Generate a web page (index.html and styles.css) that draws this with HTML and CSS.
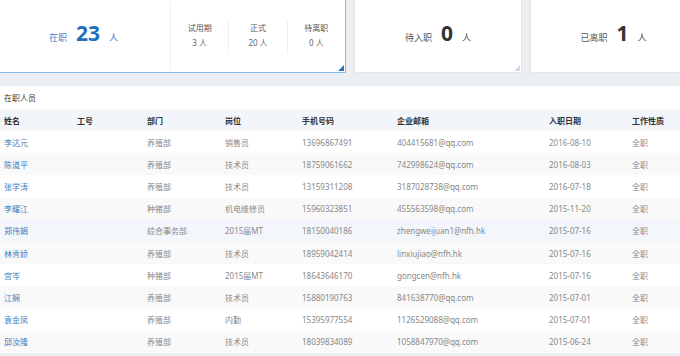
FILE: index.html
```html
<!DOCTYPE html>
<html lang="zh-CN">

<head>
  <meta charset="UTF-8">
  <meta name="viewport" content="width=device-width, initial-scale=1.0">
  <title>在职人员</title>
  <link rel="stylesheet" href="styles.css">
</head>

<body>
  <!-- summary cards -->
  <div class="stats">
    <div class="card card-active">
      <div class="main-stat">
        <span class="label">在职</span>
        <span class="num">23</span>
        <span class="unit">人</span>
      </div>
      <div class="sub-stats">
        <div class="sub">
          <div class="sub-label">试用期</div>
          <div class="sub-val">3 人</div>
        </div>
        <div class="sub">
          <div class="sub-label">正式</div>
          <div class="sub-val">20 人</div>
        </div>
        <div class="sub">
          <div class="sub-label">待离职</div>
          <div class="sub-val">0 人</div>
        </div>
      </div>
      <span class="corner"></span>
    </div>
    <div class="card card-small">
      <span class="label">待入职</span>
      <span class="num">0</span>
      <span class="unit">人</span>
      <span class="corner corner-gray"></span>
    </div>
    <div class="card card-small">
      <span class="label">已离职</span>
      <span class="num">1</span>
      <span class="unit">人</span>
    </div>
  </div>

  <div class="panel">
    <div class="panel-title">在职人员</div>
    <table class="staff">
      <thead>
        <tr>
          <th class="c-name">姓名</th>
          <th class="c-no">工号</th>
          <th class="c-dept">部门</th>
          <th class="c-post">岗位</th>
          <th class="c-phone">手机号码</th>
          <th class="c-mail">企业邮箱</th>
          <th class="c-date">入职日期</th>
          <th>工作性质</th>
        </tr>
      </thead>
      <tbody>
        <tr><td><a href="#">李达元</a></td><td></td><td>养殖部</td><td>销售员</td><td>13696867491</td><td>404415681@qq.com</td><td>2016-08-10</td><td>全职</td></tr>
        <tr><td><a href="#">陈道平</a></td><td></td><td>养殖部</td><td>技术员</td><td>18759061662</td><td>742998624@qq.com</td><td>2016-08-03</td><td>全职</td></tr>
        <tr><td><a href="#">张学涛</a></td><td></td><td>养殖部</td><td>技术员</td><td>13159311208</td><td>3187028738@qq.com</td><td>2016-07-18</td><td>全职</td></tr>
        <tr><td><a href="#">李耀江</a></td><td></td><td>种猪部</td><td>机电维修员</td><td>15960323851</td><td>455563598@qq.com</td><td>2015-11-20</td><td>全职</td></tr>
        <tr class="hover"><td><a href="#">郑伟娟</a></td><td></td><td>综合事务部</td><td>2015届MT</td><td>18150040186</td><td>zhengweijuan1@nfh.hk</td><td>2015-07-16</td><td>全职</td></tr>
        <tr><td><a href="#">林秀娇</a></td><td></td><td>养殖部</td><td>技术员</td><td>18959042414</td><td>linxiujiao@nfh.hk</td><td>2015-07-16</td><td>全职</td></tr>
        <tr><td><a href="#">宫岑</a></td><td></td><td>种猪部</td><td>2015届MT</td><td>18643646170</td><td>gongcen@nfh.hk</td><td>2015-07-16</td><td>全职</td></tr>
        <tr><td><a href="#">江娴</a></td><td></td><td>养殖部</td><td>技术员</td><td>15880190763</td><td>841638770@qq.com</td><td>2015-07-01</td><td>全职</td></tr>
        <tr><td><a href="#">袁金凤</a></td><td></td><td>养殖部</td><td>内勤</td><td>15395977554</td><td>1126529088@qq.com</td><td>2015-07-01</td><td>全职</td></tr>
        <tr><td><a href="#">邱汝隆</a></td><td></td><td>养殖部</td><td>技术员</td><td>18039834089</td><td>1058847970@qq.com</td><td>2015-06-24</td><td>全职</td></tr>
      </tbody>
    </table>
  </div>
</body>

</html>
```

FILE: styles.css
```css
html {
  overflow: hidden;
}

body {
  margin: 0;
  background-color: #ebeff4;
  font-family: "Noto Sans", "Noto Sans CJK SC", sans-serif;
  font-size: 8px;
  color: #777;
}

.stats {
  display: flex;
  gap: 8px;
  height: 73px;
  margin-left: -1px;
}

.card {
  position: relative;
  flex-shrink: 0;
  background-color: #fff;
  border: 1px solid #e2e7ee;
  border-top: none;
  box-sizing: border-box;
}

.card-active {
  display: flex;
  width: 347px;
  border-color: #8dbbe8;
}

.card-small {
  display: flex;
  align-items: baseline;
  justify-content: center;
  padding-top: 19px;
  width: 168px;
}

.card-small:last-child {
  width: 167px;
}

.main-stat {
  width: 171px;
  display: flex;
  align-items: baseline;
  justify-content: center;
  padding: 19px 4px 0 0;
  box-sizing: border-box;
  position: relative;
}

.main-stat::after {
  content: "";
  position: absolute;
  right: 0;
  top: 3px;
  bottom: 3px;
  border-right: 1px solid #eceff3;
}

.label {
  font-size: 9px;
  color: #555;
}

.unit {
  font-size: 9px;
  color: #555;
}

.num {
  font-size: 21px;
  font-weight: bold;
  color: #333;
  margin: 0 9px;
}

.card-active .label,
.card-active .unit {
  color: #3d86d0;
}

.card-active .num {
  color: #1f6fbe;
}

.sub-stats {
  flex: 1;
  display: flex;
  padding-top: 20px;
  height: 33px;
}

.sub {
  flex: 1;
  text-align: center;
  border-right: 1px solid #eef1f4;
  line-height: 15px;
}

.sub:last-child {
  border-right: none;
}

.sub-label {
  color: #555;
}

.sub-val {
  color: #666;
}

.corner {
  position: absolute;
  right: 1px;
  bottom: 1px;
  width: 0;
  height: 0;
  border-left: 6px solid transparent;
  border-bottom: 6px solid #2a70c4;
}

.corner-gray {
  border-bottom-color: #d3d6da;
}

.panel {
  margin-top: 13px;
  background-color: #fff;
}

.panel-title {
  height: 23px;
  line-height: 24px;
  padding-left: 4px;
  color: #333;
}

.staff {
  width: 100%;
  border-collapse: collapse;
}

.staff th,
.staff td {
  padding: 0 0 0 4px;
  text-align: left;
  white-space: nowrap;
}

.staff th {
  height: 22px;
  background-color: #f2f5f9;
  color: #333;
  font-weight: bold;
}

.staff td {
  height: 22.2px;
  color: #888;
}

.staff tbody tr:nth-child(even) {
  background-color: #f9f9f9;
}

.staff tbody tr.hover {
  background-color: #f3f7fc;
}

.staff a {
  color: #3b7ec4;
  text-decoration: none;
}

.c-name { width: 69px; }
.c-no { width: 66px; }
.c-dept { width: 74px; }
.c-post { width: 73px; }
.c-phone { width: 91px; }
.c-mail { width: 148px; }
.c-date { width: 79px; }
```
